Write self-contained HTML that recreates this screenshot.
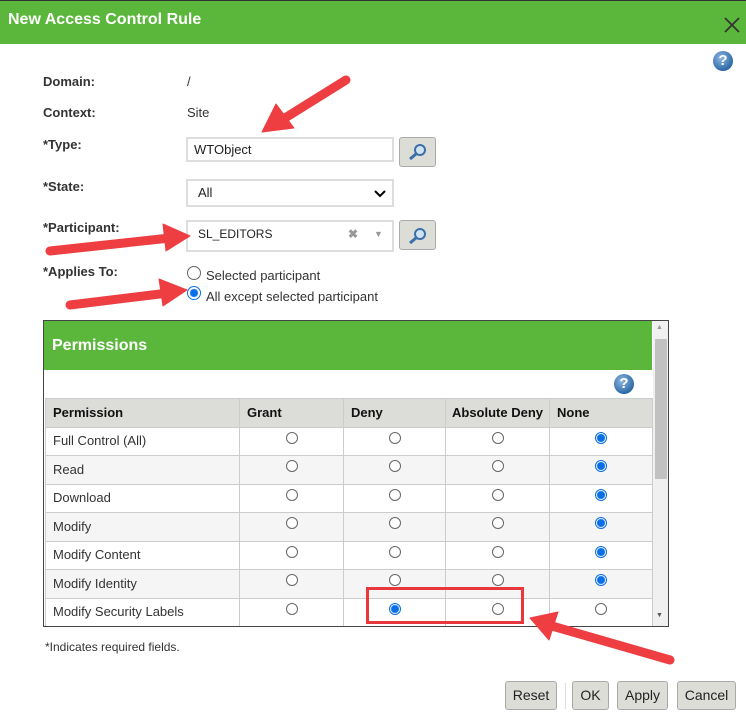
<!DOCTYPE html>
<html><head><style>
body{margin:0;width:746px;height:718px;overflow:hidden;background:#fff;font-family:"Liberation Sans",Arial,sans-serif;position:relative}
.a{position:absolute}
.hdr{left:0;top:0;width:746px;height:44px;background:#5bb73b;border-top:1px solid #333;box-sizing:border-box}
.ttl{left:8px;top:11px;color:#fff;font-weight:bold;font-size:16px}
.lbl{left:43px;font-size:13px;font-weight:bold;color:#333}
.val{left:187px;font-size:13px;color:#333}
.inp{left:186px;width:208px;border:2px solid #ddd;box-sizing:border-box;background:#fff;font-size:13px;color:#222;padding-left:6px}
.btn{background:#ddddd8;border:1px solid #aaa;border-radius:3px;box-sizing:border-box}
.help{width:20px;height:20px;border-radius:50%;background:radial-gradient(circle at 40% 35%,#8fb7e0,#2e6aa8 70%,#1c4a7e);color:#fff;font-weight:bold;font-size:15px;text-align:center;line-height:20px}
table{border-collapse:collapse;font-size:13px;color:#333;table-layout:fixed}
tr{height:28.5px}
td,th{border:1px solid #ccc;padding:0 0 0 7px;text-align:left;line-height:14px;height:auto}
th{background:#dcdcd8;font-weight:bold;color:#111}
tr:nth-child(odd) td{background:#f5f5f5}
.r{width:12px;height:12px;border:1px solid #666;border-radius:50%;display:inline-block;box-sizing:border-box;background:#fff;vertical-align:top}
.s{border:1px solid #0a6ee8;background:radial-gradient(circle,#0a6ee8 3.5px,#fff 4.5px)}
td.c{padding:4px 0 0 0;text-align:center;vertical-align:top;line-height:12px}
.bt{top:681px;height:29px;font-size:14px;color:#222;text-align:center;line-height:27px}
</style></head><body>
<div class="a hdr"></div>
<div class="a ttl">New Access Control Rule</div>
<svg class="a" style="left:724px;top:17px" width="16" height="16"><path d="M1 1L15 15M15 1L1 15" stroke="#333" stroke-width="1.8"/></svg>
<div class="a help" style="left:713px;top:51px">?</div>

<div class="a lbl" style="top:74px">Domain:</div><div class="a val" style="top:74px">/</div>
<div class="a lbl" style="top:105px">Context:</div><div class="a val" style="top:105px">Site</div>
<div class="a lbl" style="top:137px">*Type:</div>
<div class="a inp" style="top:137px;height:25px;line-height:21px">WTObject</div>
<div class="a btn" style="left:399px;top:137px;width:37px;height:30px"></div>
<div class="a lbl" style="top:179px">*State:</div>
<div class="a inp" style="top:179px;height:28px;line-height:24px;padding-left:10px">All<svg style="position:absolute;right:6px;top:9px" width="12" height="8"><path d="M1 1L6 6L11 1" fill="none" stroke="#000" stroke-width="2"/></svg></div>
<div class="a lbl" style="top:220px">*Participant:</div>
<div class="a inp" style="top:220px;height:32px;line-height:24px;font-size:12px;padding-left:10px">SL_EDITORS<span style="position:absolute;left:160px;color:#999;font-weight:bold">✖</span><span style="position:absolute;left:186px;color:#999;font-size:9px">▼</span></div>
<div class="a btn" style="left:399px;top:220px;width:37px;height:30px"></div>
<svg class="a" style="left:399px;top:137px" width="37" height="115"><g fill="none" stroke="#3a6fa8" stroke-width="2"><circle cx="21" cy="13" r="5" fill="#cfe3f5"/><line x1="17" y1="17" x2="11" y2="22" stroke-width="3"/><circle cx="21" cy="97" r="5" fill="#cfe3f5"/><line x1="17" y1="101" x2="11" y2="106" stroke-width="3"/></g></svg>
<div class="a lbl" style="top:264px">*Applies To:</div>
<div class="a r" style="left:187px;top:266px;width:14px;height:14px"></div>
<div class="a val" style="left:206px;top:268px">Selected participant</div>
<div class="a r s" style="left:187px;top:286px;width:14px;height:14px"></div>
<div class="a val" style="left:206px;top:289px">All except selected participant</div>

<div class="a" style="left:43px;top:320px;width:626px;height:307px;border:1px solid #444;box-sizing:border-box;overflow:hidden">
<div style="height:49px;background:#5bb73b;color:#fff;font-weight:bold;font-size:16px;line-height:50px;padding-left:8px;width:600px">Permissions</div>
<div class="help" style="position:absolute;left:570px;top:53px">?</div>
<table style="position:absolute;left:1px;top:77px;width:608px">
<colgroup><col style="width:194px"><col style="width:104px"><col style="width:102px"><col style="width:104px"><col></colgroup>
<tr><th>Permission</th><th>Grant</th><th>Deny</th><th style="padding-left:6px">Absolute Deny</th><th>None</th></tr>
<tr><td>Full Control (All)</td><td class="c"><i class="r"></i></td><td class="c"><i class="r"></i></td><td class="c"><i class="r"></i></td><td class="c"><i class="r s"></i></td></tr>
<tr><td>Read</td><td class="c"><i class="r"></i></td><td class="c"><i class="r"></i></td><td class="c"><i class="r"></i></td><td class="c"><i class="r s"></i></td></tr>
<tr><td>Download</td><td class="c"><i class="r"></i></td><td class="c"><i class="r"></i></td><td class="c"><i class="r"></i></td><td class="c"><i class="r s"></i></td></tr>
<tr><td>Modify</td><td class="c"><i class="r"></i></td><td class="c"><i class="r"></i></td><td class="c"><i class="r"></i></td><td class="c"><i class="r s"></i></td></tr>
<tr><td>Modify Content</td><td class="c"><i class="r"></i></td><td class="c"><i class="r"></i></td><td class="c"><i class="r"></i></td><td class="c"><i class="r s"></i></td></tr>
<tr><td>Modify Identity</td><td class="c"><i class="r"></i></td><td class="c"><i class="r"></i></td><td class="c"><i class="r"></i></td><td class="c"><i class="r s"></i></td></tr>
<tr><td>Modify Security Labels</td><td class="c"><i class="r"></i></td><td class="c"><i class="r s"></i></td><td class="c"><i class="r"></i></td><td class="c"><i class="r"></i></td></tr>
</table>
<div style="position:absolute;left:609px;top:0;width:16px;height:307px;background:#f0f0f0"></div>
<div style="position:absolute;left:611px;top:18px;width:12px;height:140px;background:#c1c1c1"></div>
<div style="position:absolute;left:612px;top:3px;font-size:7px;color:#999">▲</div>
<div style="position:absolute;left:612px;top:291px;font-size:7px;color:#555">▼</div>
</div>
<div class="a" style="left:366px;top:587px;width:158px;height:37px;border:3px solid #e8383d;box-sizing:border-box"></div>

<div class="a" style="left:45px;top:640px;font-size:12px;color:#333">*Indicates required fields.</div>
<div class="a btn bt" style="left:505px;width:52px">Reset</div>
<div class="a" style="left:565px;top:683px;width:1px;height:26px;background:#ddd"></div>
<div class="a btn bt" style="left:572px;width:37px">OK</div>
<div class="a btn bt" style="left:617px;width:51px">Apply</div>
<div class="a btn bt" style="left:677px;width:59px">Cancel</div>

<svg class="a" style="left:0;top:0" width="746" height="718"><g fill="#ee3e42" stroke="#ee3e42" stroke-linejoin="round" stroke-linecap="round">
<line x1="346" y1="80" x2="285" y2="118" stroke-width="9"/><polygon points="262,132 276,104 294,128"/>
<line x1="50" y1="251" x2="170" y2="238" stroke-width="9"/><polygon points="190,236 163,224 166,251"/>
<line x1="70" y1="305" x2="168" y2="293" stroke-width="9"/><polygon points="187,290 159,279 163,306"/>
<line x1="670" y1="660" x2="552" y2="626" stroke-width="9"/><polygon points="530,618 558,612 549,640"/>
</g></svg>
</body></html>
